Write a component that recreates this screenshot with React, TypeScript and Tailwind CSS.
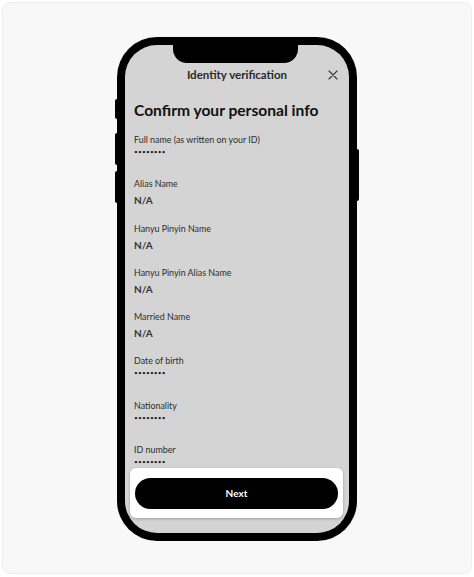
import React from "react";

const items: { label: string; value: string; masked?: boolean }[] = [
  { label: "Full name (as written on your ID)", value: "••••••••", masked: true },
  { label: "Alias Name", value: "N/A" },
  { label: "Hanyu Pinyin Name", value: "N/A" },
  { label: "Hanyu Pinyin Alias Name", value: "N/A" },
  { label: "Married Name", value: "N/A" },
  { label: "Date of birth", value: "••••••••", masked: true },
  { label: "Nationality", value: "••••••••", masked: true },
  { label: "ID number", value: "••••••••", masked: true },
];

export default function App() {
  return (
    <div className="w-[474px] h-[577px] bg-white p-[2px]" style={{ fontFamily: "Lato, 'Open Sans', sans-serif" }}>
      <div className="w-[470px] h-[572px] rounded-[8px] bg-[#f8f8f8] border border-[#efefef] flex justify-center pt-[34px]">
        <div className="relative w-[240px] h-[504px]">
          {/* side buttons */}
          <div className="absolute left-[-2px] top-[62px] w-[3px] h-[20px] bg-black rounded-l-[2px]" />
          <div className="absolute left-[-2px] top-[96px] w-[3px] h-[32px] bg-black rounded-l-[2px]" />
          <div className="absolute left-[-2px] top-[134px] w-[3px] h-[32px] bg-black rounded-l-[2px]" />
          <div className="absolute right-[-2px] top-[112px] w-[3px] h-[52px] bg-black rounded-r-[2px]" />
          <div className="relative w-full h-full rounded-[40px] bg-black p-[8px]">
            <div className="relative w-full h-full rounded-[32px] bg-[#d4d4d4] overflow-hidden flex flex-col text-[#1e1e1e]">
              <div className="relative mt-[22px] h-[16px] flex items-center justify-center">
                <span className="text-[11.5px] font-bold text-[#2a2a2a]">Identity verification</span>
                <svg className="absolute right-[11px] top-[3px]" width="10" height="10" viewBox="0 0 10 10" fill="none">
                  <path d="M1 1L9 9M9 1L1 9" stroke="#333" strokeWidth="1.1" strokeLinecap="round" />
                </svg>
              </div>
              <h1 className="mt-[16px] px-[9px] text-[15.6px] leading-[22px] font-bold text-[#111]">
                Confirm your personal info
              </h1>
              <div className="mt-[13px] px-[9px] flex flex-col">
                {items.map((it) => (
                  <div key={it.label} className="h-[44.3px] shrink-0">
                    <div className="text-[8.9px] leading-[12px] text-[#2c2c2c]">{it.label}</div>
                    {it.masked ? (
                      <div className="text-[6.5px] leading-[12px] tracking-[0.2px] text-[#1e1e1e]">{it.value}</div>
                    ) : (
                      <div className="mt-[4px] text-[10px] leading-[12px] font-bold text-[#333]">{it.value}</div>
                    )}
                  </div>
                ))}
              </div>
              <div className="absolute left-[5px] right-[6px] top-[423px] h-[50px] bg-white rounded-[6px] shadow-[0_1px_3px_rgba(0,0,0,0.25)] px-[5px] pt-[10px]">
                <button className="w-full h-[31px] rounded-full bg-black text-white text-[10px] font-bold">
                  Next
                </button>
              </div>
            </div>
          </div>
          {/* notch */}
          <div className="absolute left-[56px] top-0 w-[125px] h-[26px] bg-black rounded-b-[14px]" />
        </div>
      </div>
    </div>
  );
}
